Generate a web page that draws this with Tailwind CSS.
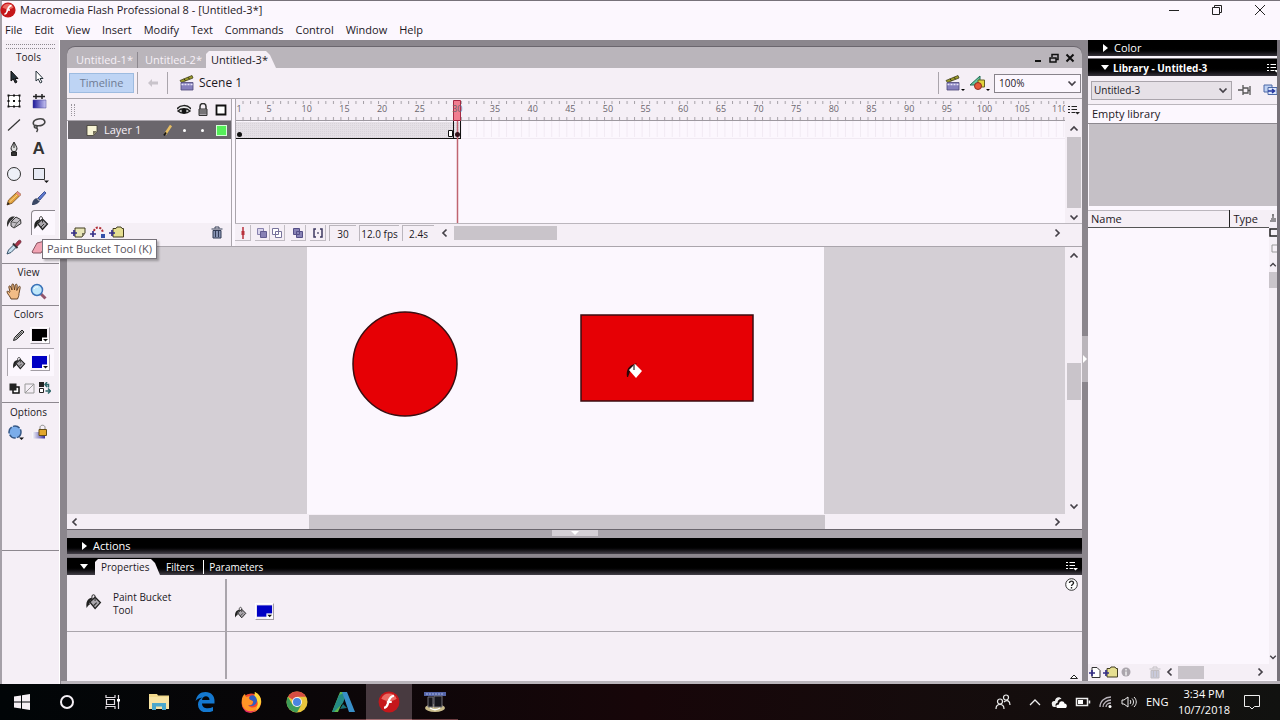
<!DOCTYPE html>
<html lang="en">
<head>
<meta charset="UTF-8" />
<meta name="viewport" content="width=device-width, initial-scale=1" />
<title>Macromedia Flash Professional 8 - [Untitled-3*]</title>
<script src="https://cdn.jsdelivr.net/npm/@tailwindcss/browser@4"></script>
</head>
<body class="h-screen flex flex-col overflow-hidden bg-[#fcf7fe] text-[#1c181e] text-[11px] leading-4 font-['Open_Sans','Noto_Sans',sans-serif]">

<!-- Shared icons -->
<svg class="hidden">
  <symbol id="bucket" viewBox="0 0 16 16">
    <path d="M1.500 14C.7 9 2 5.500 6 4.500l2 1.500c-3 0-4 2-3.500 5-1 0-1.500 1-3 3z" fill="#222"/>
    <path d="M4.500 8.500l5-4.500 5 5-5 5.500z" fill="#aaa6ac" stroke="#222" stroke-width="1.200"/>
    <path d="M6.500 6.500V3.500c0-2.500 3-2.500 3 0v4M8 12l3-3" fill="none" stroke="#333"/>
  </symbol>
  <symbol id="down" viewBox="0 0 10 10"><path d="M1.500 3.500L5 7l3.500-3.500" fill="none" stroke="#454148" stroke-width="1.700"/></symbol>
  <symbol id="up" viewBox="0 0 10 10"><path d="M1.500 6.500L5 3l3.500 3.500" fill="none" stroke="#454148" stroke-width="1.700"/></symbol>
  <symbol id="left" viewBox="0 0 10 10"><path d="M6.500 1.500L3 5l3.500 3.500" fill="none" stroke="#454148" stroke-width="1.700"/></symbol>
  <symbol id="right" viewBox="0 0 10 10"><path d="M3.500 1.500L7 5 3.500 8.500" fill="none" stroke="#454148" stroke-width="1.700"/></symbol>
  <symbol id="menu" viewBox="0 0 12 10"><path d="M0 1.500h2M0 4.500h2M0 7.500h2M3.500 1.500H9M3.500 4.500H9M3.500 7.500H7" stroke="currentColor"/><path d="M7 7h5L9.500 9.500z" fill="currentColor"/></symbol>
  <symbol id="clapper" viewBox="0 0 16 16">
    <path d="M1 5.500L13 .500l1 2.500L2.500 7.500z" fill="#9d9c2c" stroke="#44431c" stroke-width=".800"/>
    <path d="M5 3.800l1.500 2M9 2.200l1.500 2" stroke="#33320f"/>
    <path d="M2 7.500h12V15H2z" fill="#8680bd" stroke="#4c477a" stroke-width=".800"/>
    <path d="M2.500 9.500h11" stroke="#e6e2f6" stroke-width="1.500" stroke-dasharray="2 1"/>
  </symbol>
  <symbol id="folder" viewBox="0 0 16 14">
    <path d="M4 3.500h3l1-1.500h4l1 1.500h1.500V12H4z" fill="#e5de91" stroke="#403c20"/>
    <path d="M0 8h6M3 5v6" stroke="#352f86" stroke-width="1.700"/>
  </symbol>
  <symbol id="trash" viewBox="0 0 12 13">
    <path d="M2 4.500h8V12H2z" fill="#8994b4" stroke="currentColor"/>
    <path d="M.500 3h11M4 2.500V1h4v1.500M4.500 5v6M7.500 5v6" fill="none" stroke="currentColor"/>
  </symbol>
  <symbol id="page" viewBox="0 0 12 11">
    <path d="M1 .500h10v6L7.500 10.500H1z" fill="#f7f4d4" stroke="#3c3a30" stroke-width=".800"/>
    <path d="M11 6H7v4.500z" fill="#77735c"/>
  </symbol>
  <symbol id="flash" viewBox="0 0 20 20">
    <circle cx="10" cy="10" r="9.500" fill="#c5171b"/>
    <path d="M3 7a7.500 7.500 0 0 1 14 0c-4 3-9 3-14 0z" fill="#ec6a62"/>
    <path d="M14.500 4.500c-4 0-4.500 4-5.500 7-.6 2-1.500 3.500-3.500 3.800M8 10h4.500" fill="none" stroke="#fff" stroke-width="2"/>
  </symbol>
</svg>

<header class="shrink-0 border-t border-[#77727a] border-l-2 border-l-[#a5a0a8]">
  <div class="h-[18px] flex items-center">
    <svg class="size-4 -ml-0.5"><use href="#flash"/></svg>
    <h1 class="ml-1 flex-1 text-[11px]">Macromedia Flash Professional 8 - [Untitled-3*]</h1>
    <div class="flex items-center gap-[31px] mr-[14px]">
      <button aria-label="Minimize"><svg class="size-3" viewBox="0 0 12 12"><path d="M1 6.500h10" stroke="#222"/></svg></button>
      <button aria-label="Restore"><svg class="size-3" viewBox="0 0 12 12"><path d="M1.500 3.500h7v7h-7zM3.500 3.500v-2h7v7h-2" fill="none" stroke="#222"/></svg></button>
      <button aria-label="Close"><svg class="size-3" viewBox="0 0 12 12"><path d="M1 1l10 10M11 1L1 11" stroke="#222"/></svg></button>
    </div>
  </div>
  <nav class="h-[21px] flex items-center gap-3 pl-[3px] text-[11px]">
    <button>File</button><button>Edit</button><button>View</button><button>Insert</button><button>Modify</button><button>Text</button><button>Commands</button><button>Control</button><button>Window</button><button>Help</button>
  </nav>
</header>

<main class="flex-1 min-h-0 flex bg-[#8b868d] border-l-2 border-[#a5a0a8]">

  <!-- Tools -->
  <aside class="relative w-[58px] shrink-0 bg-[#f5eff6] border-r border-[#fff] text-center text-[10px]">
    <div class="mx-1 mt-1 h-[5px] border-y border-dotted border-[#8d888f]"></div>
    <h2 class="h-4 pr-1">Tools</h2>
    <div class="grid grid-cols-2 h-[194px] pr-2">
      <button class="grid place-items-center" aria-label="Selection"><svg class="size-4" viewBox="0 0 16 16"><path d="M5 2v10l2.300-2 2 4 1.700-1-2-3.500h3z" fill="#26323a" stroke="#111"/></svg></button>
      <button class="grid place-items-center" aria-label="Subselection"><svg class="size-4" viewBox="0 0 16 16"><path d="M5 2v10l2.300-2 2 4 1.700-1-2-3.500h3z" fill="#fff" stroke="#26323a"/></svg></button>
      <button class="grid place-items-center" aria-label="Free Transform"><svg class="size-4" viewBox="0 0 16 16"><path d="M2.500 2.500h11v11h-11z" fill="#fff" stroke="#444"/><path d="M1.500 2.500h2M7 2.500h2M12.500 2.500h2M1.500 13.500h2M7 13.500h2M12.500 13.500h2M1.500 8h2M12.500 8h2M7 8h2" stroke="#111" stroke-width="2"/></svg></button>
      <button class="grid place-items-center" aria-label="Gradient Transform"><svg class="size-4" viewBox="0 0 16 16"><defs><linearGradient id="g1"><stop stop-color="#1c1799"/><stop offset="1" stop-color="#c9c6f3"/></linearGradient></defs><path d="M2 7h13v8H2z" fill="url(#g1)" stroke="#4a4696" stroke-width=".500"/><path d="M2 3.500h12M5 1v5M11 1v5" stroke="#222" stroke-width="1.500"/></svg></button>
      <button class="grid place-items-center" aria-label="Line"><svg class="size-4" viewBox="0 0 16 16"><path d="M2 13.500L14 2.500" stroke="#333" stroke-width="1.200"/></svg></button>
      <button class="grid place-items-center" aria-label="Lasso"><svg class="size-4" viewBox="0 0 16 16"><path d="M5 9C1 8 1 3 7.500 2c7-1 8 4 4 6-2 1-4.500 1-6.500.500C3 8 2.500 11 5 11c2-.5 1-2.500-.5-2.500M5 11c2 .5 2 2 .5 4" fill="none" stroke="#444" stroke-width="1.500"/></svg></button>
      <button class="grid place-items-center" aria-label="Pen"><svg class="size-4" viewBox="0 0 16 16"><path d="M8 1C6.500 4 5 6 5 8l1.500 2.500h3L11 8C11 6 9.500 4 8 1z" fill="#ddd" stroke="#222"/><path d="M8 2v5M5.500 11h5v3.500h-5z" fill="#333" stroke="#222"/></svg></button>
      <button class="grid place-items-center font-bold text-[17px] text-[#333] font-['Liberation_Sans',sans-serif]" aria-label="Text">A</button>
      <button class="grid place-items-center" aria-label="Oval"><svg class="size-4" viewBox="0 0 16 16"><circle cx="8" cy="8" r="6.500" fill="#eef0f8" stroke="#333"/></svg></button>
      <button class="grid place-items-center" aria-label="Rectangle"><svg class="size-4 overflow-visible" viewBox="0 0 16 16"><path d="M2.500 2.500h11v11h-11z" fill="#e7eaf4" stroke="#333"/><path d="M13 14.500h5L15.500 17z" fill="#111"/></svg></button>
      <button class="grid place-items-center" aria-label="Pencil"><svg class="size-4" viewBox="0 0 16 16"><path d="M1 15l1.500-5 9-8.500 3.500 3-9 8.800z" fill="#e3a13c" stroke="#70491b" stroke-width=".800"/><path d="M10 3l3.500 3L15 4.500 11.500 1.500z" fill="#e68d92"/><path d="M1 15l.8-3 2 2z" fill="#222"/><path d="M4 11.500l7-6.500" stroke="#f8d68c"/></svg></button>
      <button class="grid place-items-center" aria-label="Brush"><svg class="size-4" viewBox="0 0 16 16"><path d="M7 8l6.500-6.500 1.500 1.500-6 7z" fill="#5d78cf" stroke="#2b3f80" stroke-width=".800"/><path d="M1 15c0-4 2.500-7 5.500-7l2.500 2.500C8 13 5 15 1 15z" fill="#3a4764"/><path d="M6 8.500l2.500 2.500" stroke="#ddd"/></svg></button>
      <button class="grid place-items-center" aria-label="Ink Bottle"><svg class="size-4" viewBox="0 0 16 16"><path d="M1.500 13C0 8 2 4 6 2.500h3L6 6c-2 1-3 3-4.500 7z" fill="#333"/><path d="M5 8l5-5 4.500 2.500.5 4-7 4.500-3-2z" fill="#c3bfc5" stroke="#333"/><path d="M6 8l5 1 3-3M11 9l-3 4.500" fill="none" stroke="#666"/></svg></button>
      <button class="ml-1 -mr-1 pr-1 grid place-items-center border-t border-l border-[#8b868d] rounded-tl bg-[#fcf7fe]" aria-label="Paint Bucket"><svg class="size-4"><use href="#bucket"/></svg></button>
      <button class="grid place-items-center" aria-label="Eyedropper"><svg class="size-4" viewBox="0 0 16 16"><path d="M1 15l1.500-4L8 5.500l2.500 2.500L5 13.500z" fill="#c8e0ef" stroke="#38536a"/><path d="M7 4.500l4.500 4.500" stroke="#333" stroke-width="2"/><path d="M9 5.500L12 2c2-2 4 0 2.500 2L11 7.500z" fill="#a93348" stroke="#5b2030" stroke-width=".700"/></svg></button>
      <button class="grid place-items-center" aria-label="Eraser"><svg class="size-4" viewBox="0 0 16 16"><path d="M1 13l5-9 8-2 1 4-5 8H2z" fill="#f1a3b3" stroke="#86515e"/></svg></button>
    </div>

    <section class="mt-1 border-t border-[#8d888f]">
      <h2 class="h-4 pr-1">View</h2>
      <div class="grid grid-cols-2 h-[22px] pr-2">
        <button class="grid place-items-center" aria-label="Hand"><svg class="size-[17px]" viewBox="0 0 17 17"><path d="M5 16C4 13 2 12 1 9c0-1.500 1.500-1 2.500.5L4 9 2.800 4c0-1.500 1.500-1.500 2 0L6 7l-.2-5c.2-1.400 1.700-1.400 2 0L8.500 7l.8-5c.4-1.300 1.800-1 1.900.3L10.800 7.500l1.700-3.600c.7-1.200 2-.6 1.700.8L13 10.500c0 3-1 4-1.500 5.500z" fill="#f2bc86" stroke="#583719" stroke-width=".900"/></svg></button>
        <button class="grid place-items-center" aria-label="Zoom"><svg class="size-[17px]" viewBox="0 0 17 17"><path d="M10.500 10.500l5 5" stroke="#93556b" stroke-width="3"/><circle cx="7" cy="7" r="5.500" fill="#bfe7fa" stroke="#3a72b8" stroke-width="1.500"/><path d="M4 6c.5-1.500 2-2.500 4-2" fill="none" stroke="#fff"/></svg></button>
      </div>
    </section>

    <section class="border-t border-[#8d888f] mt-[3px]">
      <h2 class="h-4 pr-1">Colors</h2>
      <div class="flex items-center gap-1 h-[26px] pl-2.5">
        <svg class="size-[14px]" viewBox="0 0 14 14"><path d="M1.500 12.500l1-3L10 2l2 2-7.500 7.500z" fill="#aaa" stroke="#222"/><path d="M4 10l6-6" stroke="#555"/></svg>
        <button aria-label="Stroke color" class="border border-[#fff] border-r-[#a29da4] border-b-[#a29da4]"><svg class="w-[18px] h-[15px]" viewBox="0 0 18 15"><path d="M1 1h15v12H1z" fill="#000"/><path d="M11 9.500h7V15h-7z" fill="#fff"/><path d="M12 11h5l-2.500 2.500z" fill="#111"/></svg></button>
      </div>
      <div class="flex items-center gap-1 h-7 mx-[5px] pl-1 border-t border-l border-[#aaa5ac] bg-[#fcf7fe]">
        <svg class="size-[14px]"><use href="#bucket"/></svg>
        <button aria-label="Fill color" class="border border-[#fff] border-r-[#a29da4] border-b-[#a29da4]"><svg class="w-[18px] h-[15px]" viewBox="0 0 18 15"><path d="M1 1h15v12H1z" fill="#0000c4"/><path d="M11 9.500h7V15h-7z" fill="#fff"/><path d="M12 11h5l-2.500 2.500z" fill="#111"/></svg></button>
      </div>
      <div class="flex items-center justify-between h-6 mb-0.5 pl-[7px] pr-[8px]">
        <button aria-label="Black and white"><svg class="size-[11px]" viewBox="0 0 11 11"><path d="M4 4h6v6H4z" fill="#fff" stroke="#111" stroke-width="1.500"/><path d="M.500 .500h7v7h-7z" fill="#222"/></svg></button>
        <button aria-label="No color"><svg class="size-[11px]" viewBox="0 0 11 11"><path d="M1 1h9v9H1zM1 10l9-9" fill="none" stroke="#999"/></svg></button>
        <button aria-label="Swap colors"><svg class="size-3" viewBox="0 0 12 12"><path d="M0 0h5v5H0z" fill="#222"/><path d="M.500 6.500h4v4h-4z" fill="#fff" stroke="#222"/><path d="M6 2.500h3.500v3M11 9H6.500M8 0L6 2.500 8 5M9 6.500L11.500 9 9 11.500" fill="none" stroke="#2f686b" stroke-width="1.500"/></svg></button>
      </div>
    </section>

    <section class="border-t border-[#8d888f] pt-px">
      <h2 class="h-4 pr-1">Options</h2>
      <div class="grid grid-cols-2 h-6 pr-2">
        <button class="grid place-items-center" aria-label="Gap size"><svg class="w-5 h-4" viewBox="0 0 20 16"><circle cx="11" cy="8" r="6" fill="#7badea" stroke="#345684" stroke-width="1.500" stroke-dasharray="7 1.500"/><path d="M15 13.500h5L17.500 16z" fill="#111"/></svg></button>
        <button class="grid place-items-center" aria-label="Lock fill"><svg class="size-4" viewBox="0 0 16 16"><defs><linearGradient id="g2"><stop stop-color="#fff"/><stop offset="1" stop-color="#37319d"/></linearGradient></defs><path d="M1 8h13v6.500H1z" fill="url(#g2)"/><path d="M9 6V3.500c0-3 5-3 5 0V6" fill="none" stroke="#888"/><path d="M8 5.500h7.500v6H8z" fill="#e3a72d" stroke="#664e17"/></svg></button>
      </div>
    </section>
    <div class="h-[107px] border-b border-[#8d888f]"></div>

    <div role="tooltip" class="absolute z-10 left-10 top-[199px] h-5 px-1 border border-[#77727a] bg-white text-[11px] leading-[18px] text-[#57525b] whitespace-nowrap shadow-[2px_2px_2px_#0004]">Paint Bucket Tool (K)</div>
  </aside>

  <!-- Document and bottom panels -->
  <div class="flex-1 min-w-0 flex flex-col pl-[7px] pr-1.5 pt-1.5">
    <section class="flex-1 min-h-0 flex flex-col">
      <div class="h-[22px] flex items-end rounded-t-lg border-t border-[#6b666e] bg-[#bab5bb] text-[#f7f1f8] text-left">
        <button class="w-[71px] h-4 border-r border-[#8d888f] pl-[9px] text-left leading-4">Untitled-1*</button>
        <button class="w-[68px] h-4 pl-[7px] text-left leading-4">Untitled-2*</button>
        <button class="w-[70px] h-[17px] pl-[5px] text-left bg-[#f5eff6] text-[#1c181e] leading-4 [clip-path:polygon(0_3px,3px_0,60px_0,64px_4px,70px_100%,0_100%)]">Untitled-3*</button>
        <div class="ml-auto mr-[7px] flex gap-1.5 self-center">
          <button aria-label="Minimize document"><svg class="size-2.5" viewBox="0 0 10 10"><path d="M2 8h6" stroke="#111" stroke-width="2"/></svg></button>
          <button aria-label="Restore document"><svg class="size-2.5" viewBox="0 0 10 10"><path d="M1 5h6v4H1zM3 4V1.500h6v5H7.500" fill="none" stroke="#111" stroke-width="1.500"/></svg></button>
          <button aria-label="Close document"><svg class="size-2.5" viewBox="0 0 10 10"><path d="M1.500 1.500l7 7M8.500 1.500l-7 7" stroke="#111" stroke-width="2"/></svg></button>
        </div>
      </div>

      <div class="h-[30px] flex items-center bg-[#f5eff6]">
        <button class="ml-0.5 w-[65px] h-5 border border-[#9dbbe0] bg-[#bed4f4] text-[#6e7b93] text-[11px] leading-4">Timeline</button>
        <span class="w-px h-[22px] ml-[3px] bg-[#aaa5ac]"></span>
        <button class="w-[29px] grid place-items-center" aria-label="Back"><svg class="w-3 h-2.5" viewBox="0 0 12 10"><path d="M1 5l4-4v2.500h6v3H5V9z" fill="#c9c4cb"/></svg></button>
        <span class="w-px h-[22px] bg-[#aaa5ac]"></span>
        <svg class="size-4 ml-[11px]"><use href="#clapper"/></svg>
        <span class="ml-1 text-[12px]">Scene 1</span>
        <span class="w-px h-[22px] ml-auto bg-[#aaa5ac]"></span>
        <button class="ml-1.5 flex items-end" aria-label="Edit scene"><svg class="size-4"><use href="#clapper"/></svg><svg class="w-1 h-0.5" viewBox="0 0 4 2"><path d="M0 0h4L2 2z"/></svg></button>
        <button class="ml-1 flex items-end" aria-label="Edit symbols"><svg class="w-[17px] h-4" viewBox="0 0 17 16"><path d="M1 10L11 1v9z" fill="#65c6a0" stroke="#236c55"/><path d="M9 5h6.500v7H9z" fill="#e2d43e" stroke="#666022"/><circle cx="9" cy="11" r="3.500" fill="#e65838" stroke="#8e2e20"/></svg><svg class="w-1 h-0.5" viewBox="0 0 4 2"><path d="M0 0h4L2 2z"/></svg></button>
        <label class="relative ml-1 mr-px">
          <select aria-label="Zoom" class="block appearance-none w-[87px] h-[19px] pl-1 border border-[#88838b] bg-[#fcf7fe] text-[10px] leading-4"><option>100%</option></select>
          <svg class="absolute right-1 top-1 size-2.5 pointer-events-none"><use href="#down"/></svg>
        </label>
      </div>

      <!-- Timeline -->
      <div class="h-[148px] flex border-t border-[#aaa5ac] bg-[#fcf7fe]">
        <div class="w-[165px] flex flex-col border-r border-[#aaa5ac]">
          <div class="h-[22px] flex items-center justify-end pr-1 gap-[7px] bg-[#f5eff6] border-b border-[#aaa5ac]">
            <span class="mr-auto ml-1 w-1 h-3 border-x border-dotted border-[#99949b]"></span>
            <svg class="w-[14px] h-3" viewBox="0 0 14 12"><path d="M0 5c3-4 10-5 14 0M1 7c3-3 9-3 12 0-3 3-9 3-12 0z" fill="#eee" stroke="#222" stroke-width="1.500"/><circle cx="7" cy="7" r="2.500" fill="#111"/></svg>
            <svg class="w-2.5 h-[13px]" viewBox="0 0 10 13"><path d="M2 6V3.500c0-4 6-4 6 0V6" fill="none" stroke="#333" stroke-width="1.500"/><path d="M1 6h8v6.500H1z" fill="#aaa6ac" stroke="#333"/><path d="M1 8h8M1 10h8" stroke="#444"/></svg>
            <svg class="size-3" viewBox="0 0 12 12"><path d="M1.500 1.500h9v9h-9z" fill="#fff" stroke="#111" stroke-width="1.800"/></svg>
          </div>
          <div class="h-[18px] ml-px flex items-center bg-[#6a666c] text-[#f7f1f8] text-[11px]">
            <svg class="w-3 h-[11px] ml-[18px]"><use href="#page"/></svg>
            <span class="ml-1.5 flex-1">Layer 1</span>
            <svg class="w-2.5 h-3 mr-2.5" viewBox="0 0 10 12"><path d="M2 10.500L8 1.500" stroke="#e5bd62" stroke-width="2.500"/><path d="M1 11.500l2-3" stroke="#111" stroke-width="1.800"/></svg>
            <span class="size-[3px] mr-[15px] rounded-full bg-white"></span>
            <span class="size-[3px] mr-[12px] rounded-full bg-white"></span>
            <span class="size-[11px] mr-1 border border-[#d5ffd8] bg-[#55ef59]"></span>
          </div>
          <div class="mt-auto h-[23px] pb-[5px] flex items-center gap-[3px] pl-1 pr-2 bg-[#f5eff6]">
            <button aria-label="Insert layer"><svg class="w-4 h-[14px]" viewBox="0 0 16 14"><path d="M4 3h10v5l-3 4H4z" fill="#e8e5b7" stroke="#403c20"/><path d="M14 8h-3v4" fill="#77735c"/><path d="M0 8h6M3 5v6" stroke="#352f86" stroke-width="1.700"/></svg></button>
            <button aria-label="Add motion guide"><svg class="w-4 h-[14px]" viewBox="0 0 16 14"><path d="M4 6c1-5 8-5 9 2" fill="none" stroke="#b02b33" stroke-width="2" stroke-dasharray="2 1.500"/><path d="M11 9h4v4h-4z" fill="#344fa8"/><path d="M0 9h6M3 6v6" stroke="#352f86" stroke-width="1.700"/></svg></button>
            <button aria-label="Insert layer folder"><svg class="w-4 h-[14px]"><use href="#folder"/></svg></button>
            <button class="ml-auto text-[#333c55]" aria-label="Delete layer"><svg class="w-3 h-[13px]"><use href="#trash"/></svg></button>
          </div>
        </div>

        <div class="flex-1 min-w-0 flex flex-col pl-[3px]">
          <div class="flex-1 flex min-h-0">
            <svg id="frames" class="flex-1 min-w-0 h-full border-l border-[#aaa5ac] text-[9px]">
              <defs>
                <pattern id="ticks" x="-1" width="7.530" height="23" patternUnits="userSpaceOnUse"><path d="M.500 2v3M.500 18v4" stroke="#a49fa6"/></pattern>
                <pattern id="cells" x="-1" width="7.530" height="18" patternUnits="userSpaceOnUse"><path d="M.500 0v18" stroke="#f1eaf3"/></pattern>
                <pattern id="dots" width="2" height="2" patternUnits="userSpaceOnUse"><path d="M0 0h2v2H0z" fill="#e5e0e6"/><path d="M0 0h1v1H0z" fill="#d9d4da"/></pattern>
              </defs>
              <rect width="100%" height="22" fill="#f5eff6"/>
              <rect width="100%" height="22" fill="url(#ticks)"/>
              <path d="M0 21.500h2000" stroke="#9e99a0"/>
              <rect y="22" width="100%" height="16" fill="url(#cells)"/>
              <path d="M0 39.500h2000" stroke="#f1eaf3"/>
              <rect y="23" width="225" height="17" fill="url(#dots)"/>
              <path d="M0 39.500h225M217.500 22v17M224.500 22v17" fill="none" stroke="#111"/>
              <path d="M212.500 31.500h4v6h-4z" fill="#fff" stroke="#111"/>
              <path d="M217.500 1.500h7v20h-7z" fill="#f07d90" stroke="#a62843"/>
              <path d="M221.500 22v104" stroke="#c06470" stroke-width="1.500"/>
              <circle cx="3.500" cy="35.500" r="2.500" fill="#111"/>
              <circle cx="221.500" cy="35.500" r="2.500" fill="#33111a"/>
            </svg>
            <div class="w-[17px] flex flex-col items-center bg-[#f5eff6]">
              <button class="h-[22px] grid place-items-center text-[#222]" aria-label="Frame view"><svg class="w-3 h-2.5"><use href="#menu"/></svg></button>
              <svg class="size-2.5 my-[3px] shrink-0"><use href="#up"/></svg>
              <span class="w-[14px] h-[71px] bg-[#c9c4ca]"></span>
              <svg class="size-2.5 mt-1 shrink-0"><use href="#down"/></svg>
            </div>
          </div>
          <div class="h-[23px] pb-1 flex items-center border-t border-[#bbb6bd] bg-[#f5eff6] text-[10px]">
            <button class="w-4 h-4 grid place-items-center border-r border-b border-[#c1bcc3]" aria-label="Center frame"><svg class="w-1.5 h-3" viewBox="0 0 6 12"><path d="M3 0v12" stroke="#b8303b" stroke-width="1.500"/><path d="M1.500 4h3v4h-3z" fill="#b8303b"/></svg></button>
            <button class="w-[15px] h-4 ml-1 grid place-items-center border-r border-b border-[#c1bcc3]" aria-label="Onion skin"><svg class="size-2.5" viewBox="0 0 10 10"><path d="M.500 .500h6v6h-6z" fill="#d8d4ec" stroke="#8882ae"/><path d="M3.500 3.500h6v6h-6z" fill="#8882b5" stroke="#625c90"/></svg></button>
            <button class="w-[15px] h-4 grid place-items-center border-r border-b border-[#c1bcc3]" aria-label="Onion skin outlines"><svg class="size-2.5" viewBox="0 0 10 10"><path d="M.500 .500h6v6h-6zM3.500 3.500h6v6h-6z" fill="#fff" stroke="#77729b"/></svg></button>
            <button class="w-[15px] h-4 ml-1.5 grid place-items-center border-r border-b border-[#c1bcc3]" aria-label="Edit multiple frames"><svg class="size-2.5" viewBox="0 0 10 10"><path d="M.500 .500h6v6h-6zM3.500 3.500h6v6h-6z" fill="#8882b5" stroke="#544e86"/></svg></button>
            <button class="w-4 h-4 ml-1 grid place-items-center border-r border-b border-[#c1bcc3]" aria-label="Modify onion markers"><svg class="size-2.5" viewBox="0 0 10 10"><path d="M3 1H1v8h2M7 1h2v8H7M4.200 5h1.600" fill="none" stroke="#3d3960" stroke-width="1.500"/></svg></button>
            <span class="w-[27px] h-4 ml-[3px] border-t border-l border-[#bbb6bd] text-center leading-4">30</span>
            <span class="w-10 h-4 ml-[3px] border-t border-l border-[#bbb6bd] text-center leading-4">12.0 fps</span>
            <span class="w-8 h-4 ml-[3px] border-t border-l border-[#bbb6bd] text-center leading-4">2.4s</span>
            <svg class="size-2.5 ml-1.5"><use href="#left"/></svg>
            <span class="w-[103px] h-[14px] ml-1 bg-[#c9c4ca]"></span>
            <svg class="size-2.5 ml-auto mr-5"><use href="#right"/></svg>
          </div>
        </div>
      </div>

      <!-- Stage -->
      <div class="flex-1 min-h-0 flex border-t border-[#aaa5ac] bg-[#d4cfd5]">
        <div class="ml-60 w-[517px] bg-[#fcf7fe]">
          <svg class="w-full h-full" fill="#e60005" stroke="#3a0d10" stroke-width="1.500">
            <circle cx="98" cy="117" r="52"/>
            <rect x="274" y="68" width="172" height="86"/>
            <g stroke="none">
              <path d="M320 130c-1-6 1-10 5-12l5-2-6 6-3 8z" fill="#2a0709"/>
              <path d="M322 123l6-6 7 7-6 7z" fill="#fff"/>
              <path d="M327 118v5" stroke="#555" stroke-width="1.500"/>
            </g>
          </svg>
        </div>
        <div class="ml-auto w-[17px] flex flex-col items-center bg-[#f5eff6]">
          <svg class="size-2.5 mt-1"><use href="#up"/></svg>
          <span class="w-[14px] h-[37px] mt-[102px] bg-[#c9c4ca]"></span>
          <svg class="size-2.5 mt-auto mb-[3px]"><use href="#down"/></svg>
        </div>
      </div>
      <div class="h-4 flex items-center bg-[#f5eff6] border-b border-[#6b666e]">
        <svg class="size-2.5 ml-[3px]"><use href="#left"/></svg>
        <span class="w-[516px] h-[14px] ml-[229px] bg-[#c9c4ca]"></span>
        <svg class="size-2.5 ml-auto mr-5"><use href="#right"/></svg>
      </div>
    </section>

    <button class="h-2 w-full flex justify-center bg-[#aaa5ac]" aria-label="Collapse panels"><span class="w-[46px] h-[6px] grid place-items-center bg-[#d4cfd5]"><svg class="w-2 h-1" viewBox="0 0 8 4"><path d="M0 0h8L4 4z" fill="#fff"/></svg></span></button>

    <section class="h-[143px] shrink-0 flex flex-col">
      <button class="h-4 w-full flex items-center gap-1.5 pl-[15px] bg-linear-to-b from-black from-50% to-[#45414a] text-white"><svg class="w-[5px] h-2" viewBox="0 0 5 8"><path d="M0 0v8l5-4z" fill="#fff"/></svg>Actions</button>
      <div class="h-[18px] mt-[3px] flex items-end border-t border-[#77727a] bg-linear-to-b from-black from-50% to-[#45414a] text-white text-[10px] font-medium">
        <svg class="w-2 h-[5px] ml-[13px] mr-[7px] mb-1.5" viewBox="0 0 8 5"><path d="M0 0h8L4 5z" fill="#fff"/></svg>
        <button class="w-[65px] h-4 pl-1.5 text-left bg-[#f5eff6] text-[#1c181e] [clip-path:polygon(0_3px,3px_0,56px_0,60px_4px,65px_100%,0_100%)]">Properties</button>
        <button class="h-4 pl-1.5 pr-[9px]">Filters</button>
        <button class="h-4"><span class="border-l border-white pl-[5px]">Parameters</span></button>
        <button class="ml-auto mr-1 mb-1" aria-label="Panel options"><svg class="w-3 h-2.5"><use href="#menu"/></svg></button>
      </div>
      <div class="flex-1 min-h-0 flex flex-col bg-[#f5eff6]">
        <div class="h-[57px] flex border-b border-[#aaa5ac]">
          <div class="w-[160px] mt-1 flex border-r-2 border-[#aaa5ac] text-[10px]">
            <svg class="size-[17px] ml-[18px] mt-3.5 shrink-0"><use href="#bucket"/></svg>
            <p class="ml-[11px] mt-3 leading-[13px]">Paint Bucket<br />Tool</p>
          </div>
          <svg class="size-[13px] ml-[7px] mt-[31px]"><use href="#bucket"/></svg>
          <button aria-label="Fill color" class="self-start ml-2 mt-7 border border-[#fff] border-r-[#a29da4] border-b-[#a29da4]"><svg class="w-[17px] h-[15px]" viewBox="0 0 18 15"><path d="M1 1h16v12H1z" fill="#0000c4"/><path d="M11 9.500h7V15h-7z" fill="#fff"/><path d="M12 11h5l-2.500 2.500z" fill="#111"/></svg></button>
          <button class="self-start ml-auto mt-[3px] mr-1" aria-label="Help"><svg class="size-[13px]" viewBox="0 0 13 13"><circle cx="6.500" cy="6.500" r="5.800" fill="#fff" stroke="#333"/><path d="M4.500 5c0-2.500 4-2.500 4 0 0 1.500-2 1.500-2 3M6.500 9v1.500" fill="none" stroke="#222" stroke-width="1.400"/></svg></button>
        </div>
        <div class="flex-1 flex items-end">
          <div class="w-[160px] self-stretch mb-0.5 border-r-2 border-[#aaa5ac]"></div>
          <button class="ml-auto mr-1 mb-0.5" aria-label="Collapse properties"><svg class="w-2 h-[5px]" viewBox="0 0 8 5"><path d="M.500 4.500h7L4 1z" fill="#fff" stroke="#222"/></svg></button>
        </div>
      </div>
    </section>
    <div class="h-[3px] -mx-1.5 shrink-0 bg-[#bab5bb]"></div>
  </div>

  <!-- Library -->
  <aside class="relative w-48 shrink-0 flex flex-col bg-[#fcf7fe] border-r-3 border-[#77727a]">
    <button class="absolute -left-1.5 top-[296px] w-1.5 h-[46px] grid place-items-center bg-[#bab5bb]" aria-label="Collapse library"><svg class="w-1 h-2" viewBox="0 0 4 8"><path d="M0 0v8l4-4z" fill="#fff"/></svg></button>
    <button class="h-4 w-full flex items-center gap-1.5 pl-[15px] bg-linear-to-b from-black from-50% to-[#35313a] text-white"><svg class="w-[5px] h-2" viewBox="0 0 5 8"><path d="M0 0v8l5-4z" fill="#fff"/></svg>Color</button>
    <div class="h-[18px] mt-0.5 flex items-center border-t border-[#77727a] pl-[13px] bg-linear-to-b from-black from-50% to-[#35313a] text-white text-[10px] font-bold">
      <svg class="w-2 h-[5px]" viewBox="0 0 8 5"><path d="M0 0h8L4 5z" fill="#fff"/></svg>
      <h2 class="ml-1">Library - Untitled-3</h2>
      <button class="ml-auto" aria-label="Library options"><svg class="w-2.5 h-2.5" viewBox="0 0 10 10"><use href="#menu" width="12" height="10"/></svg></button>
    </div>
    <div class="h-7 flex items-center pl-[3px] bg-[#f5eff6]">
      <label class="relative">
        <select aria-label="Document" class="block appearance-none w-[141px] h-[19px] pl-0.5 border border-[#aaa5ac] bg-[#e6e1e7] text-[10px] leading-4"><option>Untitled-3</option></select>
        <svg class="absolute right-1 top-1 size-2.5 pointer-events-none"><use href="#down"/></svg>
      </label>
      <button class="ml-1.5" aria-label="Pin library"><svg class="w-[14px] h-3" viewBox="0 0 14 12"><path d="M0 6h5M5 1v10M5 4h5v5H5M12 2v9M10 6.500h2" fill="none" stroke="#555" stroke-width="1.300"/></svg></button>
      <button class="ml-auto" aria-label="New library panel"><svg class="w-[14px] h-3" viewBox="0 0 14 12"><path d="M1 1h8v7H1z" fill="#bfd1f2" stroke="#4c68a7"/><path d="M5 3.500h9v7H5z" fill="#dce6fb" stroke="#4c68a7"/><path d="M5 7h6M9 5l2.500 2L9 9" fill="none" stroke="#2537a0" stroke-width="1.500"/></svg></button>
    </div>
    <p class="h-5 pl-1 leading-[17px] border-t border-b border-t-[#bbb6bd] border-b-[#8d888f]">Empty library</p>
    <div class="h-[82px] shrink-0 ml-px bg-[#c5c0c6]"></div>
    <div class="flex-1 min-h-0 flex mt-1">
      <table class="flex-1 self-start border-collapse text-left bg-[#f5eff6]">
        <thead><tr class="h-[17px]"><th class="w-[141px] pl-[3px] py-0 font-normal border border-l-0 border-t-[#bbb6bd] border-b-[#555] border-r-[#222]">Name</th><th class="pl-1 py-0 font-normal border-b border-[#555]">Type</th></tr></thead>
      </table>
      <div class="w-2 flex flex-col items-center bg-[#f5eff6]">
        <svg class="w-1.5 h-2 mt-1" viewBox="0 0 6 8"><path d="M3 0v2M2 3h2M1 5h5M0 7h6" stroke="#333" stroke-width="1.200"/></svg>
        <svg class="w-2 h-2.5 mt-1.5" viewBox="0 0 8 10"><path d="M9 1H1v7h8" fill="none" stroke="#222" stroke-width="1.500"/></svg>
        <svg class="w-2 h-2.5 mt-1.5" viewBox="0 0 8 10"><path d="M9 1H3v7h6" fill="none" stroke="#999"/></svg>
        <svg class="w-2 h-2.5 mt-1.5"><use href="#up"/></svg>
        <span class="w-full h-4 mt-0.5 bg-[#c9c4ca]"></span>
        <svg class="w-2 h-2.5 mt-auto mb-0.5"><use href="#down"/></svg>
      </div>
    </div>
    <div class="h-4 mb-px shrink-0 flex items-center gap-0.5 pl-px bg-[#f5eff6]">
      <button aria-label="New symbol"><svg class="w-3 h-[13px]" viewBox="0 0 12 13"><path d="M3 1.500h5l3 3v7H3z" fill="#fff" stroke="#333"/><path d="M0 7h6M3 4v6" stroke="#352f86" stroke-width="1.700"/></svg></button>
      <button aria-label="New folder"><svg class="w-4 h-[14px]"><use href="#folder"/></svg></button>
      <button aria-label="Properties"><svg class="size-2.5" viewBox="0 0 10 10"><circle cx="5" cy="5" r="4.500" fill="#aaa5ac"/><path d="M5 2v1.500M5 4.500v4" stroke="#eee" stroke-width="1.500"/></svg></button>
      <button class="ml-4 opacity-40 text-[#777]" aria-label="Delete"><svg class="w-3 h-[13px]"><use href="#trash"/></svg></button>
      <svg class="size-2.5 ml-0.5"><use href="#left"/></svg>
      <span class="w-[26px] h-[13px] ml-px bg-[#c9c4ca]"></span>
      <svg class="size-2.5 ml-auto mr-3"><use href="#right"/></svg>
    </div>
    <div class="h-[3px] -mr-1 shrink-0 bg-[#bab5bb]"></div>
  </aside>
</main>

<!-- Taskbar -->
<footer class="h-9 shrink-0 flex items-center bg-linear-to-r from-[#010507] via-[#170609] to-[#111210] text-white">
  <button class="w-11 h-9 grid place-items-center" aria-label="Start"><svg class="size-4" viewBox="0 0 16 16"><path d="M0 2.500l7-1v6H0zM8 1.300L16 0v7.500H8zM0 8.500h7v6l-7-1zM8 8.500h8V16l-8-1.300z" fill="#f5f0f5"/></svg></button>
  <button class="w-[46px] h-9 grid place-items-center" aria-label="Search"><svg class="size-4" viewBox="0 0 16 16"><circle cx="8" cy="8" r="6" fill="none" stroke="#f5f0f5" stroke-width="2"/></svg></button>
  <button class="w-[46px] h-9 grid place-items-center" aria-label="Task view"><svg class="size-4" viewBox="0 0 16 16"><path d="M1 1v2.500h9V1M1.500 5.500h8v5h-8zM1 15v-2.500h9V15M13.500 1v14" fill="none" stroke="#e5e0e5" stroke-width="1.200"/><path d="M12 5h3v2.500h-3z" fill="#fff"/></svg></button>
  <button class="w-[46px] h-9 grid place-items-center" aria-label="File Explorer"><svg class="w-5 h-[18px]" viewBox="0 0 20 18"><path d="M0 1h8l1 1.500h11V16H0z" fill="#f2d98b"/><path d="M0 4h20v12H0z" fill="#f8e4a3"/><path d="M3 17v-7h14v7h-4v-3.500H7V17z" fill="#4ba8cb"/></svg></button>
  <button class="w-[46px] h-9 grid place-items-center" aria-label="Edge"><svg class="w-5 h-5" viewBox="0 0 20 20"><path d="M.500 9C2 3 5 0 10.500 0c6 0 9 4 9 9v2.500H7c.2 5 6 6 11 3.500v4c-8 3.500-15 .500-15-6.500 0-3 1.500-5.500 4.500-7C4 6 2 7 .500 9zM7 8h7.500c0-5-7-5-7.500 0z" fill="#1478cf"/></svg></button>
  <button class="w-[46px] h-9 grid place-items-center" aria-label="Firefox"><svg class="size-[22px]" viewBox="0 0 22 22"><circle cx="11" cy="12" r="9.500" fill="#f0462e"/><path d="M3 16C0 8 3 4 5 3l1 3 4-1c-2 3 0 4 3 5 0 4-3 5-5 4 3 4 8 3 10-1 2-5 0-8-4-12 6 2 8 7 7 12-2 9-14 12-18 3z" fill="#ff9526"/><path d="M15 1c6 3 7 9 5 13-1 3-3 4-4 5 3-6 2-10-2-13z" fill="#ffd83a"/><path d="M10 5c4-2 7 1 7 5-1 5-6 6-9 4 3 1 6-1 5-4-3-1-5-2-3-5z" fill="#315ec0"/><path d="M3 16c3 5 8 5 13 3-3 3-11 5-13-3z" fill="#e22867"/></svg></button>
  <button class="w-[46px] h-9 grid place-items-center" aria-label="Chrome"><svg class="size-[22px]" viewBox="0 0 22 22"><circle cx="11" cy="11" r="10.500" fill="#e9c63c"/><path d="M11 11L1.900 5.800A10.500 10.500 0 0 1 20.100 5.800H11z" fill="#d54d43"/><path d="M1.900 5.800A10.500 10.500 0 0 0 11 21.500l4.500-8L11 11 6.500 13.500z" fill="#3e9d58"/><circle cx="11" cy="11" r="5" fill="#f7f5f7"/><circle cx="11" cy="11" r="4" fill="#4a85df"/></svg></button>
  <button class="w-[46px] h-9 grid place-items-center border-b border-[#6d3e42]" aria-label="Autodesk"><svg class="w-[23px] h-[22px]" viewBox="0 0 23 22"><path d="M8 1h7L6 21H0z" fill="#60b84c"/><path d="M7 4l8-3-4 11-9 9H0z" fill="#248b85"/><path d="M10 1h5l8 20h-6z" fill="#388fc8"/><path d="M11 13l4 4-7 1z" fill="#1a7076"/></svg></button>
  <button class="w-[46px] h-9 grid place-items-center border-b border-[#a36c70] bg-[#483a40]" aria-label="Flash"><svg class="size-[22px]"><use href="#flash"/></svg></button>
  <button class="w-[46px] h-9 grid place-items-center border-b border-[#6d3e42]" aria-label="Recorder"><svg class="w-[22px] h-5" viewBox="0 0 22 20"><path d="M0 0h22v4H0z" fill="#5565a8"/><path d="M2 2h18" stroke="#a8b5df" stroke-dasharray="2 1"/><ellipse cx="11" cy="16" rx="10" ry="4" fill="#cabc8c"/><path d="M4 5h5v10H4zM10 4h8v11h-8z" fill="#17161b" stroke="#737078"/><path d="M6 16c3 2 7 2 10 0" fill="none" stroke="#fff" stroke-width="1.500"/></svg></button>

  <div class="ml-auto flex items-center">
    <svg class="size-4 mr-[18px]" viewBox="0 0 16 16"><g fill="none" stroke="#eee" stroke-width="1.200"><circle cx="5" cy="7.500" r="2.500"/><path d="M1 15c0-6 8-6 8 0"/><circle cx="11" cy="3.500" r="2.500"/><path d="M9 8c3-3 6-1 6 3"/></g></svg>
    <svg class="w-3 h-2 mr-2.5" viewBox="0 0 12 8"><path d="M1 7l5-5 5 5" fill="none" stroke="#eee" stroke-width="1.300"/></svg>
    <svg class="w-4 h-3 mr-2" viewBox="0 0 16 12"><path d="M1 9C0 6 2 4.500 4 5c0-4 5-5 6.500-2-3 0-4 2-4 4C4.500 7 4 9 5 11H3C2 11 1 10 1 9z" fill="#eee"/><path d="M6 12c-2-2 0-4 2-3.500 0-4 5-4 5.500-1 3 0 3 4.500.5 4.500z" fill="#fff"/></svg>
    <svg class="w-4 h-2.5 mr-2" viewBox="0 0 16 10"><path d="M1.500 1.500h11v7h-11zM14.500 3.500v3" fill="none" stroke="#eee" stroke-width="1.500"/><path d="M3 3h5v4H3z" fill="#fff"/></svg>
    <svg class="w-[14px] h-3 mr-2" viewBox="0 0 14 12"><path d="M1 11C1 5 6 1 12 1M4 11c0-4 4-7 8-7M7 11c0-2 2-4 5-4" fill="none" stroke="#bbb6bd" stroke-width="1.300"/><circle cx="11" cy="10.500" r="1.500" fill="#fff"/></svg>
    <svg class="w-4 h-3 mr-[9px]" viewBox="0 0 16 12"><path d="M1 4h2l4-3v10L3 8H1zM9 4c1 1 1 3 0 4M11 2.500c2 2 2 5 0 7M13 1c3 3 3 7 0 10" fill="none" stroke="#eee"/></svg>
    <span class="w-[22px] text-[11px]">ENG</span>
    <time class="w-[72px] text-center text-[11px] leading-4">3:34 PM<br />10/7/2018</time>
    <button class="ml-1 mr-5" aria-label="Notifications"><svg class="w-4 h-4" viewBox="0 0 16 16"><path d="M.500 1.500h15v11h-5L8 15l-2.500-2.500h-5z" fill="none" stroke="#eee"/></svg></button>
  </div>
</footer>

<script>
  const frames = document.getElementById('frames');
  const playhead = frames.querySelector('circle');
  const frameWidth = 7.53;

  // Frame numbers on the ruler: 1, 5, 10, ...
  for (let n = 0; n <= 110; n += 5) {
    const label = document.createElementNS('http://www.w3.org/2000/svg', 'text');
    const frame = n === 0 ? 1 : n;
    label.setAttribute('x', 3 + (frame - 1) * frameWidth);
    label.setAttribute('y', 13);
    label.setAttribute('text-anchor', 'middle');
    label.setAttribute('fill', '#6b666e');
    label.textContent = frame;
    frames.insertBefore(label, playhead);
  }
</script>

</body>
</html>
